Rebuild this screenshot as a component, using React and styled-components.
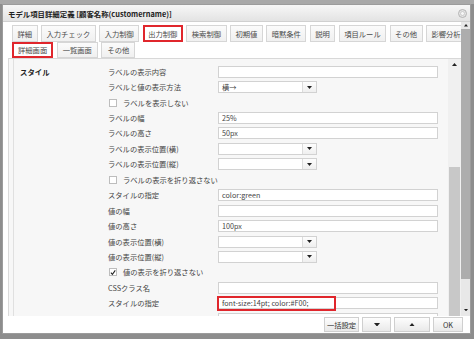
import React from 'react';
import styled, { createGlobalStyle } from 'styled-components';

const FONT = `"Noto Sans CJK JP", "Noto Sans", sans-serif`;

const Global = createGlobalStyle`
  html, body { margin: 0; padding: 0; background: #8d8d8d; }
  body { font-family: ${FONT}; width: 474px; height: 339px; overflow: hidden; }
  * { box-sizing: border-box; }
`;

const Page = styled.div`
  width: 474px;
  height: 339px;
  padding: 4px 3px 0 2px;
  background: linear-gradient(#a9a9a9 0 4px, #8d8d8d 4px);
`;

const Dialog = styled.div`
  width: 469px;
  height: 330px;
  background: #fff;
  border: 1px solid #9c9c9c;
  display: flex;
  flex-direction: column;
  overflow: hidden;
`;

const TitleBar = styled.div`
  height: 17px;
  flex: none;
  display: flex;
  align-items: center;
  justify-content: space-between;
  padding: 0 3px 0 5px;
  background: linear-gradient(#f7f7f7, #e3e3e3);
  border-bottom: 1px solid #d0d0d0;
`;

const Title = styled.span`
  font-size: 7.4px;
  font-weight: bold;
  color: #222;
`;

const Body = styled.div`
  height: 294px;
  flex: none;
  display: flex;
`;

const Main = styled.div`
  flex: 1;
  min-width: 0;
  padding: 3px 0 0 5px;
  display: flex;
  flex-direction: column;
`;

const TabRow = styled.div`
  display: flex;
  gap: ${p => p.gap || 3.4}px;
  padding-left: 4px;
  height: ${p => p.h}px;
  flex: none;
`;

const Tab = styled.div`
  height: 100%;
  padding: 0 ${p => p.pad || 4.5}px;
  display: flex;
  align-items: center;
  font-size: 7.3px;
  color: #4a4a4a;
  white-space: nowrap;
  background: ${p => (p.active ? '#fff' : 'linear-gradient(#fbfbfb, #f0f0f0)')};
  border: 1px solid ${p => (p.active ? '#e0262c' : '#d6d6d6')};
  box-shadow: ${p => (p.active ? 'inset 0 0 0 1px #e0262c' : 'none')};
`;

const Panel = styled.div`
  flex: 1;
  display: flex;
  overflow: hidden;
  border-top: 1px solid #d8d8d8;
  border-left: 1px solid #dadada;
  background: #f7f7f7;
`;

const Content = styled.div`
  flex: 1;
  min-width: 0;
  margin-left: 4px;
  border-left: 1px solid #e0e0e0;
  padding-top: 5px;
  overflow: hidden;
  display: flex;
`;

const SectionTitle = styled.div`
  width: 94px;
  flex: none;
  padding-left: 6px;
  height: 15.45px;
  display: flex;
  align-items: center;
  font-size: 7.4px;
  font-weight: bold;
  color: #222;
`;

const Rows = styled.div`
  flex: 1;
  padding-right: 10px;
`;

const Row = styled.div`
  height: 15.45px;
  display: grid;
  grid-template-columns: 110px 1fr;
  align-items: center;
`;

const Label = styled.span`
  font-size: 7.3px;
  color: #444;
  white-space: nowrap;
`;

const Field = styled.div`
  position: relative;
  display: flex;
`;

const Input = styled.div`
  width: 100%;
  height: 12px;
  background: #fff;
  border: 1px solid #d2d2d2;
  padding: 0 3px;
  display: flex;
  align-items: center;
  font-size: 7.2px;
  color: #444;
  white-space: nowrap;
`;

const Select = styled.div`
  width: 99px;
  height: 12px;
  background: #fff;
  border: 1px solid #d2d2d2;
  display: flex;
  font-size: 7.2px;
  color: #444;
`;

const SelectValue = styled.span`
  flex: 1;
  display: flex;
  align-items: center;
  padding-left: 3px;
`;

const SelectArrow = styled.span`
  width: 14px;
  flex: none;
  border-left: 1px solid #dcdcdc;
  background: linear-gradient(#fdfdfd, #efefef);
  display: flex;
  align-items: center;
  justify-content: center;
`;

const CheckRow = styled.div`
  height: 15.45px;
  display: flex;
  align-items: center;
  gap: 6px;
  padding-left: 1px;
`;

const Box = styled.span`
  width: 8px;
  height: 8px;
  flex: none;
  border: 1px solid #bdbdbd;
  background: #fff;
  display: flex;
  align-items: center;
  justify-content: center;
`;

const Highlight = styled.div`
  position: absolute;
  left: -1px;
  top: -1px;
  width: 119px;
  height: 15px;
  border: 2px solid #e0262c;
  pointer-events: none;
`;

const InnerScroll = styled.div`
  width: 13px;
  flex: none;
  background: #f0f0f0;
  display: flex;
  flex-direction: column;
  align-items: center;
`;

const ScrollArrow = styled.div`
  height: ${p => p.h}px;
  flex: none;
  width: 100%;
  display: flex;
  align-items: center;
  justify-content: center;
`;

const Spacer = styled.div`
  height: ${p => p.h}px;
  flex: none;
`;

const Thumb = styled.div`
  width: ${p => p.w}px;
  height: ${p => (p.h ? `${p.h}px` : 'auto')};
  flex: ${p => (p.h ? 'none' : 1)};
  background: ${p => p.c};
`;

const OuterScroll = styled.div`
  width: 9px;
  flex: none;
  background: #e8e8e8;
  display: flex;
  flex-direction: column;
  align-items: center;
`;

const Footer = styled.div`
  flex: 1;
  display: flex;
  align-items: center;
  justify-content: flex-end;
  gap: 3px;
  padding-right: 7px;
  background: #fff;
`;

const Button = styled.div`
  width: ${p => p.w}px;
  height: 15px;
  display: flex;
  align-items: center;
  justify-content: center;
  font-size: 7.3px;
  color: #333;
  background: linear-gradient(#fdfdfd, #e9e9e9);
  border: 1px solid #cfcfcf;
`;

const Tri = ({ down, size = 5, color = '#222' }) => (
  <svg width={size} height={size * 0.6} viewBox="0 0 10 6">
    <polygon points={down ? '0,0 10,0 5,6' : '0,6 10,6 5,0'} fill={color} />
  </svg>
);

const CloseIcon = () => (
  <svg width="9" height="9" viewBox="0 0 18 18">
    <circle cx="9" cy="9" r="8" fill="#e4e4e4" stroke="#a8a8a8" strokeWidth="1.6" />
    <circle cx="9" cy="9" r="4" fill="#f6f6f6" stroke="#b8b8b8" strokeWidth="1.2" />
  </svg>
);

const Check = () => (
  <svg width="7" height="7" viewBox="0 0 10 10">
    <path d="M1.5 5.2 L4 8 L8.8 1.5" fill="none" stroke="#222" strokeWidth="1.8" />
  </svg>
);

const mainTabs = ['詳細', '入力チェック', '入力制御', '出力制御', '検索制御', '初期値', '暗黙条件', '説明', '項目ルール', 'その他', '影響分析'];
const subTabs = ['詳細画面', '一覧画面', 'その他'];

const rows = [
  { type: 'input', label: 'ラベルの表示内容', value: '' },
  { type: 'select', label: 'ラベルと値の表示方法', value: '横→' },
  { type: 'check', label: 'ラベルを表示しない', checked: false },
  { type: 'input', label: 'ラベルの幅', value: '25%' },
  { type: 'input', label: 'ラベルの高さ', value: '50px' },
  { type: 'select', label: 'ラベルの表示位置(横)', value: '' },
  { type: 'select', label: 'ラベルの表示位置(縦)', value: '' },
  { type: 'check', label: 'ラベルの表示を折り返さない', checked: false },
  { type: 'input', label: 'スタイルの指定', value: 'color:green' },
  { type: 'input', label: '値の幅', value: '' },
  { type: 'input', label: '値の高さ', value: '100px' },
  { type: 'select', label: '値の表示位置(横)', value: '' },
  { type: 'select', label: '値の表示位置(縦)', value: '' },
  { type: 'check', label: '値の表示を折り返さない', checked: true },
  { type: 'input', label: 'CSSクラス名', value: '' },
  { type: 'input', label: 'スタイルの指定', value: 'font-size:14pt; color:#F00;', highlight: true },
  { type: 'input', label: '', value: '' },
];

export default function App() {
  return (
    <>
      <Global />
      <Page>
        <Dialog>
          <TitleBar>
            <Title>モデル項目詳細定義 [顧客名称(customername)]</Title>
            <CloseIcon />
          </TitleBar>
          <Body>
            <Main>
              <TabRow h={17}>
                {mainTabs.map(t => (
                  <Tab key={t} active={t === '出力制御'}>{t}</Tab>
                ))}
              </TabRow>
              <TabRow h={16} gap={3.5}>
                {subTabs.map(t => (
                  <Tab key={t} pad={5} active={t === '詳細画面'}>{t}</Tab>
                ))}
              </TabRow>
              <Panel>
                <Content>
                  <SectionTitle>スタイル</SectionTitle>
                  <Rows>
                    {rows.map((r, i) =>
                      r.type === 'check' ? (
                        <CheckRow key={i}>
                          <Box>{r.checked && <Check />}</Box>
                          <Label>{r.label}</Label>
                        </CheckRow>
                      ) : (
                        <Row key={i}>
                          <Label>{r.label}</Label>
                          <Field>
                            {r.type === 'input' ? (
                              <Input>{r.value}</Input>
                            ) : (
                              <Select>
                                <SelectValue>{r.value}</SelectValue>
                                <SelectArrow><Tri down size={5} /></SelectArrow>
                              </Select>
                            )}
                            {r.highlight && <Highlight />}
                          </Field>
                        </Row>
                      )
                    )}
                  </Rows>
                </Content>
                <InnerScroll>
                  <ScrollArrow h={10}><Tri size={5} /></ScrollArrow>
                  <Spacer h={98} />
                  <Thumb w={11} c="#c8c8c8" />
                </InnerScroll>
              </Panel>
            </Main>
            <OuterScroll>
              <ScrollArrow h={7}><Tri size={4} /></ScrollArrow>
              <Thumb w={9} h={250} c="#adadad" />
              <Spacer h={26} />
              <ScrollArrow h={10}><Tri down size={4} /></ScrollArrow>
            </OuterScroll>
          </Body>
          <Footer>
            <Button w={35}>一括設定</Button>
            <Button w={29}><Tri down size={6} /></Button>
            <Button w={36}><Tri size={6} /></Button>
            <Button w={30}>OK</Button>
          </Footer>
        </Dialog>
      </Page>
    </>
  );
}
